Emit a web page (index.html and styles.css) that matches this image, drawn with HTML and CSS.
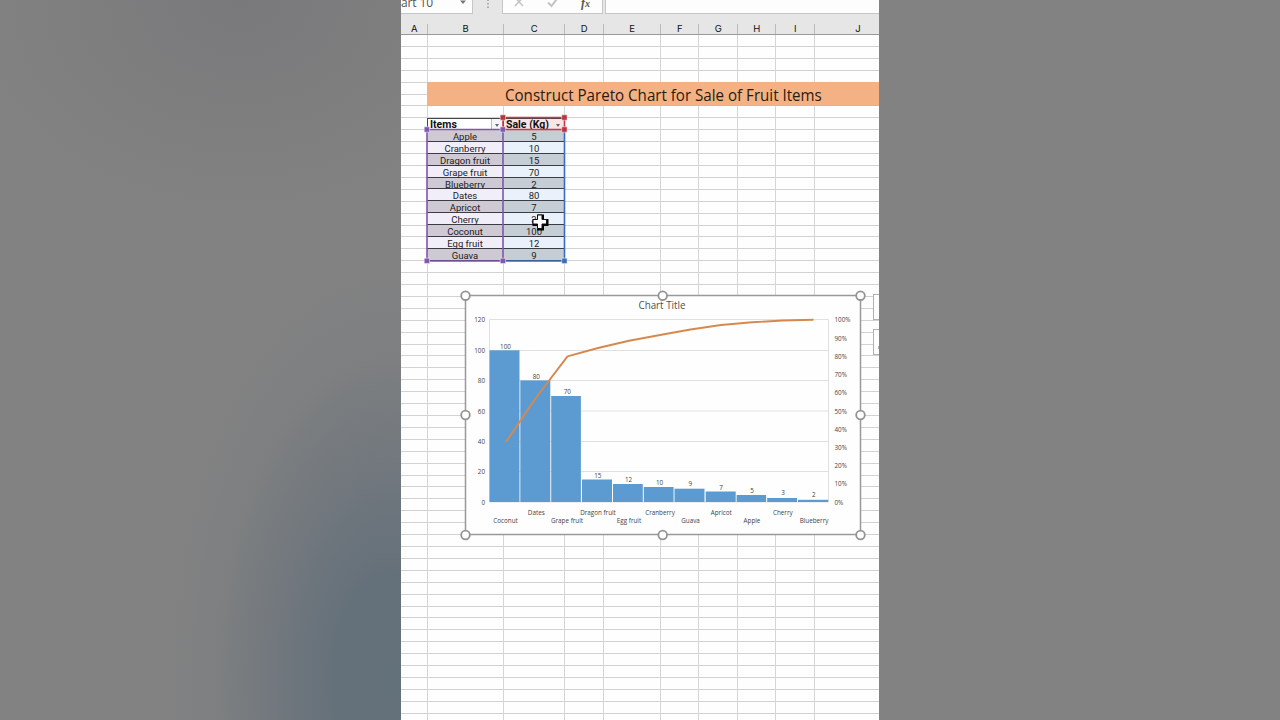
FILE: index.html
```html
<!DOCTYPE html>
<html lang="en">
<head>
  <meta charset="UTF-8">
  <meta name="viewport" content="width=device-width, initial-scale=1.0">
  <title>Pareto Chart</title>
  <link rel="stylesheet" href="styles.css">
</head>
<body>
  <main class="excel">
    <div class="formula-bar">
      <div class="name-box">
        <span>art 10</span>
        <svg width="8" height="5" viewBox="0 0 8 5"><path d="M1 0.5h6L4 4z" fill="#777"/></svg>
      </div>
      <svg class="dots" width="29" height="12" viewBox="0 0 29 12"><path d="M15 0v1M15 3v1.500M15 6.500v1.500" stroke="#999" stroke-width="1.500"/></svg>
      <div class="fx-box">
        <svg width="12" height="12" viewBox="0 0 12 12"><path d="M2 1.500l8 8.500M10 1.500L2 10" stroke="#c4c4c4" stroke-width="1.500" fill="none"/></svg>
        <svg width="12" height="12" viewBox="0 0 12 12"><path d="M1 6.500l3.500 3.500L11 1.500" stroke="#c4c4c4" stroke-width="2" fill="none"/></svg>
        <span class="fx">f<small>x</small></span>
      </div>
      <div class="formula-input"></div>
    </div>

    <div class="columns head">
      <span>A</span><span>B</span><span>C</span><span>D</span><span>E</span><span>F</span><span>G</span><span>H</span><span>I</span><span>J</span>
    </div>

    <div class="sheet">
      <div class="columns lines">
        <i></i><i></i><i></i><i></i><i></i><i></i><i></i><i></i><i></i><i></i>
      </div>

      <div class="content">
        <h1 class="title"><span>Construct Pareto Chart for Sale of Fruit Items</span></h1>

        <div class="table">
          <div class="th">Items<b class="filter"></b></div><div class="th sale">Sale (Kg)<b class="filter"></b></div>
          <div class="td">Apple</div><div class="td num">5</div>
          <div class="td light">Cranberry</div><div class="td num light">10</div>
          <div class="td">Dragon fruit</div><div class="td num">15</div>
          <div class="td light">Grape fruit</div><div class="td num light">70</div>
          <div class="td">Blueberry</div><div class="td num">2</div>
          <div class="td light">Dates</div><div class="td num light">80</div>
          <div class="td">Apricot</div><div class="td num">7</div>
          <div class="td light">Cherry</div><div class="td num light">3</div>
          <div class="td">Coconut</div><div class="td num">100</div>
          <div class="td light">Egg fruit</div><div class="td num light">12</div>
          <div class="td">Guava</div><div class="td num">9</div>

          <!-- range borders and the mouse pointer -->
          <svg class="ranges" width="146" height="152" viewBox="0 0 146 152">
            <g fill="none" stroke-width="1.600">
              <path d="M4 15.500V147h76" stroke="#7d57ab"/>
              <path d="M4 15.500h76V147" stroke="#7d57ab"/>
              <path d="M80 147h61.500V15.500" stroke="#3c6cbd"/>
              <path d="M80 3.500h61.500v12H80z" stroke="#c23b45"/>
            </g>
            <g stroke="#fff" stroke-width="0.500">
              <path d="M1.200 12.800h5.400v5.400H1.200zM77.200 12.800h5.400v5.400h-5.400zM1.200 144.200h5.400v5.400H1.200zM77.200 144.200h5.400v5.400h-5.400z" fill="#8059b0"/>
              <path d="M138.700 144.200h5.400v5.400h-5.400z" fill="#3c6cbd"/>
              <path d="M77.200 0.800h5.400v5.400h-5.400zM138.700 0.800h5.400v5.400h-5.400zM138.700 12.800h5.400v5.400h-5.400z" fill="#b83540"/>
            </g>
            <path d="M115 101.500h5v4.500h4.500v5H120v4.500h-5v-4.500h-4.500v-5h4.500z" fill="#000" stroke="#000" stroke-width="2"/>
            <path d="M114.500 101h4.500v4.500h4.500v4.500H119v4.500h-4.500v-4.500H110v-4.500h4.500z" fill="#fff" stroke="#111" stroke-width="1"/>
          </svg>
        </div>
      </div>

      <svg class="chart" width="424" height="260" viewBox="455 285 424 260">
        <rect class="area" x="465.500" y="295.500" width="395" height="239"/>
        <text class="chart-title" x="662" y="309" textLength="47" lengthAdjust="spacingAndGlyphs">Chart Title</text>

        <path class="grid" d="M489.500 502V319.500H828.500V502M489.500 350.500h339M489.500 380.500h339M489.500 411h339M489.500 441.500h339M489.500 471.500h339M489.500 502h339"/>

        <g class="bars">
          <rect x="489.500" y="350.300" width="30" height="151.700"/>
          <rect x="520.300" y="380.400" width="30" height="121.600"/>
          <rect x="551.200" y="396" width="29.700" height="106"/>
          <rect x="582" y="479.500" width="30" height="22.500"/>
          <rect x="613" y="484" width="29.800" height="18"/>
          <rect x="643.800" y="487" width="29.800" height="15"/>
          <rect x="674.500" y="488.700" width="30" height="13.300"/>
          <rect x="705.700" y="491.500" width="30" height="10.500"/>
          <rect x="736.600" y="495" width="29.500" height="7"/>
          <rect x="767.200" y="498" width="29.800" height="4"/>
          <rect x="798" y="499.800" width="30.200" height="2.200"/>
        </g>

        <polyline class="cumulative" points="506,442 536.500,397 567.500,356.300 598,348 629,340.800 660,335 690.500,329.500 721,325 752,322.300 783,320.500 813.500,319.700"/>

        <g class="labels end">
          <text x="485" y="322.300">120</text><text x="485" y="352.600">100</text><text x="485" y="383.100">80</text><text x="485" y="413.500">60</text><text x="485" y="443.800">40</text><text x="485" y="474.100">20</text><text x="485" y="504.600">0</text>
        </g>
        <g class="labels start">
          <text x="834.500" y="322.300">100%</text><text x="834.500" y="340.500">90%</text><text x="834.500" y="358.800">80%</text><text x="834.500" y="377.100">70%</text><text x="834.500" y="395.300">60%</text><text x="834.500" y="413.500">50%</text><text x="834.500" y="432">40%</text><text x="834.500" y="450.300">30%</text><text x="834.500" y="468">20%</text><text x="834.500" y="486.300">10%</text><text x="834.500" y="504.600">0%</text>
        </g>
        <g class="labels">
          <text x="505.500" y="348.500">100</text><text x="536.300" y="378.800">80</text><text x="567.300" y="393.600">70</text><text x="597.800" y="477.800">15</text><text x="628.500" y="481.500">12</text><text x="659.600" y="485.300">10</text><text x="690.200" y="486.300">9</text><text x="721" y="489.800">7</text><text x="752" y="492.600">5</text><text x="783" y="495.100">3</text><text x="813.700" y="497.100">2</text>
          <text x="505.500" y="522.700">Coconut</text><text x="536.300" y="514.500">Dates</text><text x="567" y="522.700">Grape fruit</text><text x="598" y="514.500">Dragon fruit</text><text x="629" y="522.700">Egg fruit</text><text x="660" y="514.500">Cranberry</text><text x="690.500" y="522.700">Guava</text><text x="721.300" y="514.500">Apricot</text><text x="752" y="522.700">Apple</text><text x="782.800" y="514.500">Cherry</text><text x="814" y="522.700">Blueberry</text>
        </g>

        <g class="handles">
          <circle cx="465.500" cy="295.700" r="4.300"/><circle cx="662.700" cy="295.700" r="4.300"/><circle cx="860.500" cy="295.700" r="4.300"/>
          <circle cx="465.500" cy="415" r="4.300"/><circle cx="860.500" cy="415" r="4.300"/>
          <circle cx="465.500" cy="535" r="4.300"/><circle cx="662.700" cy="535" r="4.300"/><circle cx="860.500" cy="535" r="4.300"/>
        </g>

        <g class="side">
          <rect x="873.500" y="294.500" width="20" height="25"/>
          <rect x="873.500" y="329.500" width="20" height="25"/>
          <path d="M878.500 346v3"/>
        </g>
      </svg>
    </div>
  </main>
</body>
</html>
```
FILE: styles.css
```css
* {
  box-sizing: border-box;
}
body {
  margin: 0;
  height: 720px;
  overflow: hidden;
  display: flex;
  padding-left: 401px;
  background:
    radial-gradient(ellipse 230px 430px at 390px 680px, #63717a 0%, #65717a 25%, rgba(108, 116, 124, 0.750) 50%, rgba(118, 123, 126, 0.400) 75%, rgba(130, 130, 130, 0) 100%),
    radial-gradient(ellipse 280px 220px at 240px 0, #79797b, rgba(122, 122, 124, 0)),
    #828282;
}
.excel {
  width: 478px;
  height: 720px;
  overflow: hidden;
  background: #fefefe;
  display: flex;
  flex-direction: column;
}

/* formula bar */
.formula-bar {
  height: 14px;
  flex: none;
  display: flex;
  background: #e6e6e6;
  font-family: "Open Sans", sans-serif;
  color: #555;
}
.formula-bar > div {
  background: #fdfdfd;
  border: 1px solid #c6c6c6;
  border-top: 0;
}
.name-box {
  width: 72px;
  display: flex;
  justify-content: space-between;
  padding-right: 5px;
  font-size: 12px;
  line-height: 6px;
  letter-spacing: -0.100px;
}
.formula-bar .name-box {
  border-left: 0;
}
.fx-box {
  width: 101px;
  display: flex;
  justify-content: space-between;
  padding: 0 12px 0 10px;
}
.fx-box svg {
  margin-top: -4px;
}
.fx {
  font: italic bold 12px/6px "Liberation Serif", serif;
}
.fx small {
  font-size: 10px;
}
.formula-input {
  flex: 1;
  margin-left: 2px;
}
.formula-bar .formula-input {
  border-right: 0;
}

/* columns */
.columns {
  display: grid;
  grid-template-columns: 26.500px 76px 61.500px 38.500px 57px 38.500px 38.500px 38.500px 38.500px 87px;
}
.head {
  height: 21px;
  flex: none;
  padding-top: 10px;
  background: #e6e6e6;
  border-bottom: 1px solid #999;
  font: 9.500px/10px Inter, sans-serif;
  color: #111;
  text-align: center;
}
.head span {
  border-right: 1px solid #bbb;
  padding-left: 1px;
}
.sheet {
  flex: 1;
  position: relative;
  background: repeating-linear-gradient(to bottom, transparent 0, transparent 10.907px, #d2d2d2 10.907px, #d2d2d2 11.907px);
}
.lines {
  height: 100%;
}
.lines i {
  border-right: 1px solid #d6d6d6;
}
.content {
  position: absolute;
  top: 0;
  left: 26px;
  right: 0;
  padding-top: 47px;
}
.title {
  margin: 0 0 12px;
  height: 24px;
  background: #f4b183;
  border-bottom: 1px solid #f0ad80;
  font: 16px/27px "Open Sans", sans-serif;
  color: #2b1a10;
  white-space: nowrap;
}
.title span {
  display: block;
  width: 340px;
  margin-left: 78px;
  transform-origin: left;
  transform: scaleX(0.945);
}

/* data table */
.table {
  position: relative;
  width: 138px;
  display: grid;
  grid-template-columns: 76px 62px;
  grid-auto-rows: 11.907px;
  font: 9.500px/13.500px Roboto, sans-serif;
  color: #222;
}
.th {
  display: flex;
  justify-content: space-between;
  padding-left: 2px;
  border-top: 1px solid #444;
  border-left: 1px solid #444;
  background: #fff;
  font-weight: bold;
  font-size: 10.500px;
  line-height: 12px;
  color: #111;
}
.sale {
  background: #f9e5e6;
}
.filter {
  width: 12px;
  border-left: 1px solid #bbb;
  background: #f6f6fa;
}
.filter::after {
  content: "";
  display: block;
  width: 0;
  margin: 5px 0 0 3px;
  border: 2px solid transparent;
  border-top: 3px solid #667;
  border-bottom: 0;
}
.sale .filter {
  border-left: 0;
  background: none;
}
.td {
  text-align: center;
  background: #cfc9d4;
  border-bottom: 1px solid #3c3c44;
}
.num {
  background: #c5cdd5;
}
.light {
  background: #f2eef9;
}
.num.light {
  background: #e9f2fb;
}
.ranges {
  position: absolute;
  left: -4px;
  top: -4px;
}

/* chart object floating over the cells */
.chart {
  position: absolute;
  left: 54px;
  top: 250px;
  font-family: "Open Sans", sans-serif;
}
.area {
  fill: #fefefe;
  stroke: #999;
  stroke-width: 1.500;
}
.chart-title {
  font-size: 10px;
  fill: #505050;
  text-anchor: middle;
}
.grid {
  fill: none;
  stroke: #e0e0e0;
}
.bars {
  fill: #5b9bd2;
}
.cumulative {
  fill: none;
  stroke: #d6894f;
  stroke-width: 1.900;
  stroke-linejoin: round;
}
.labels {
  font-size: 6.300px;
  fill: #444;
  text-anchor: middle;
}
.end {
  text-anchor: end;
}
.start {
  text-anchor: start;
}
.handles {
  fill: #fff;
  stroke: #949494;
  stroke-width: 1.800;
}
.side {
  fill: #fefefe;
  stroke: #b0b0b0;
}
```
